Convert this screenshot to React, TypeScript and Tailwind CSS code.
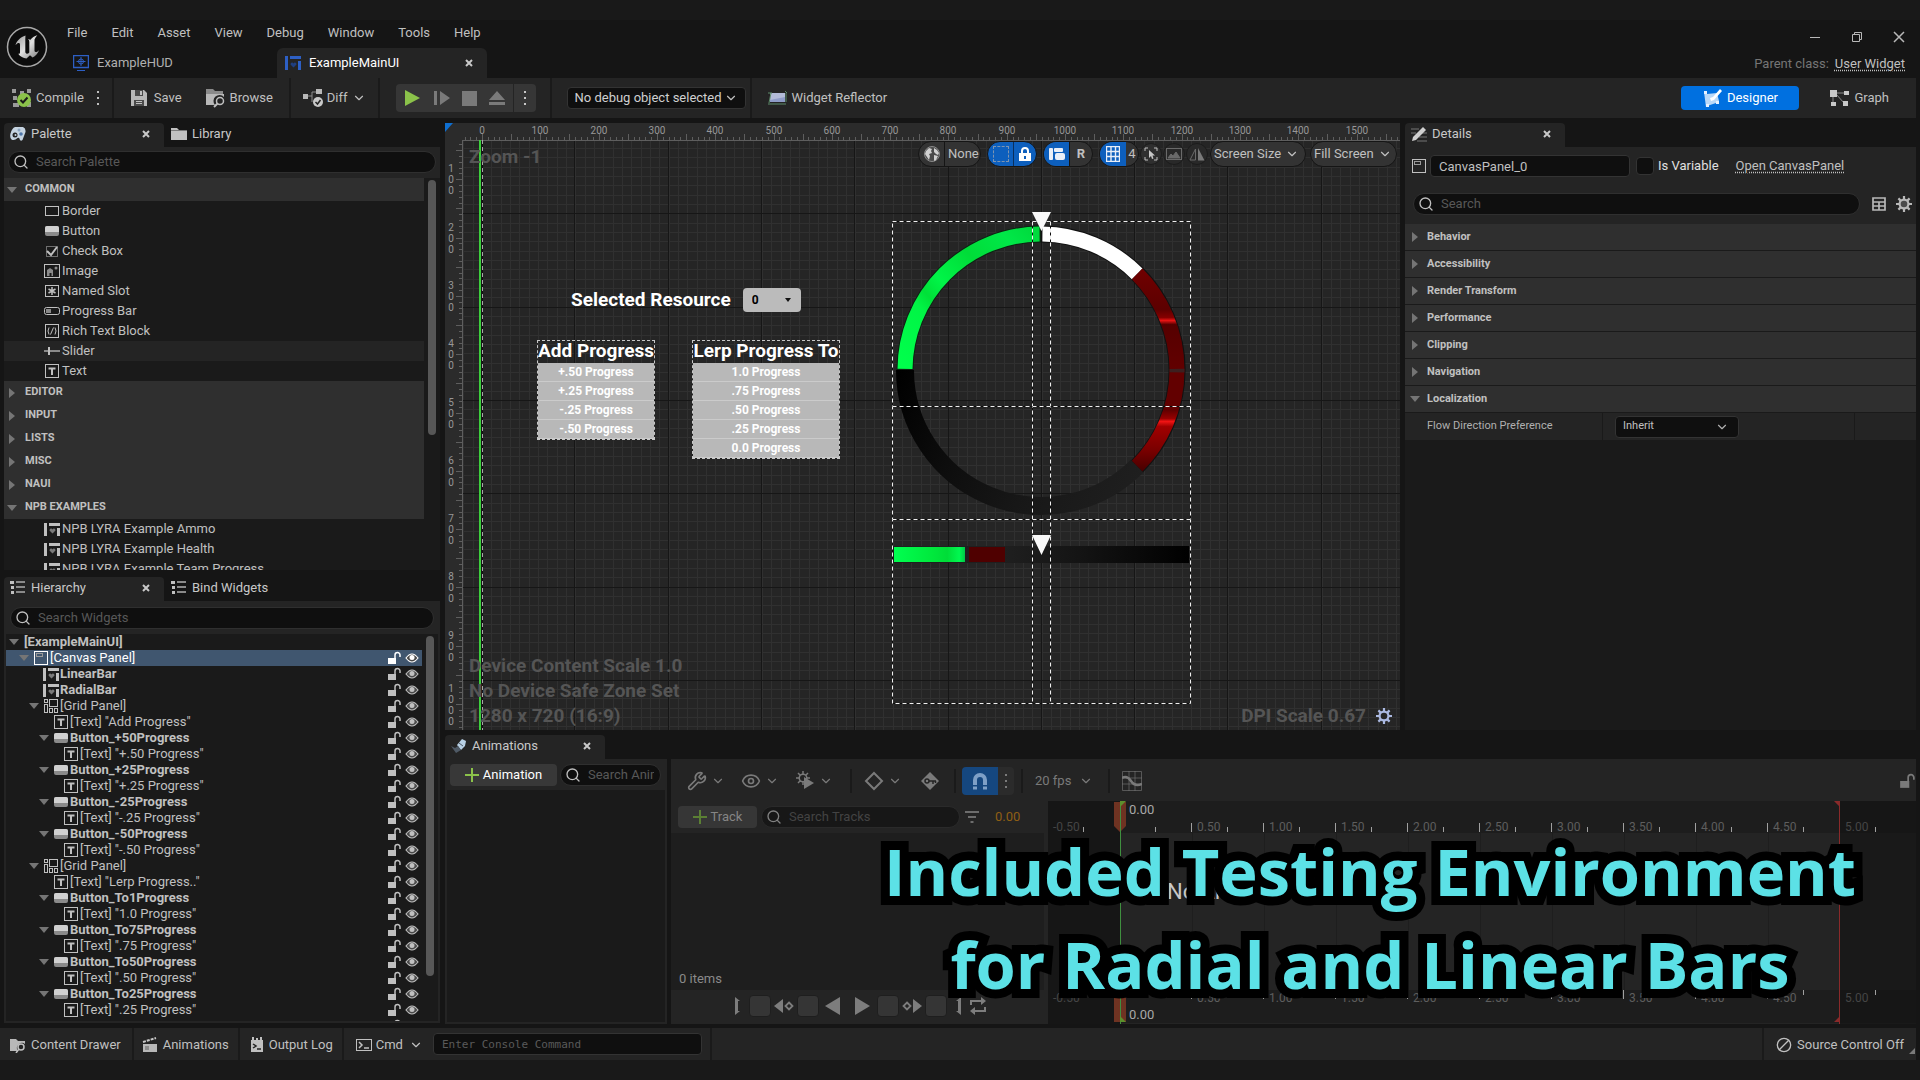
import { useState, type ReactNode } from "react";
import { ChevronDown, Search, Wrench, Eye, Ban } from "lucide-react";

/* ─────────────────────────────────────────────
   Data
───────────────────────────────────────────── */
const MENUS = ["File", "Edit", "Asset", "View", "Debug", "Window", "Tools", "Help"];

type IconName =
  | "border"
  | "button"
  | "check"
  | "image"
  | "slot"
  | "progress"
  | "rich"
  | "slider"
  | "text"
  | "widget"
  | "canvas"
  | "grid";

const COMMON: { icon: IconName; label: string }[] = [
  { icon: "border", label: "Border" },
  { icon: "button", label: "Button" },
  { icon: "check", label: "Check Box" },
  { icon: "image", label: "Image" },
  { icon: "slot", label: "Named Slot" },
  { icon: "progress", label: "Progress Bar" },
  { icon: "rich", label: "Rich Text Block" },
  { icon: "slider", label: "Slider" },
  { icon: "text", label: "Text" },
];

const EXAMPLES = [
  "NPB LYRA Example Ammo",
  "NPB LYRA Example Health",
  "NPB LYRA Example Team Progress",
];

type Node = { level: number; icon?: IconName; label: string; bold?: boolean; open?: boolean };

const TREE: Node[] = [
  { level: 0, label: "[ExampleMainUI]", bold: true, open: true },
  { level: 1, icon: "canvas", label: "[Canvas Panel]", open: true },
  { level: 2, icon: "widget", label: "LinearBar", bold: true },
  { level: 2, icon: "widget", label: "RadialBar", bold: true },
  { level: 2, icon: "grid", label: "[Grid Panel]", open: true },
  { level: 3, icon: "text", label: '[Text] "Add Progress"' },
  { level: 3, icon: "button", label: "Button_+50Progress", bold: true, open: true },
  { level: 4, icon: "text", label: '[Text] "+.50 Progress"' },
  { level: 3, icon: "button", label: "Button_+25Progress", bold: true, open: true },
  { level: 4, icon: "text", label: '[Text] "+.25 Progress"' },
  { level: 3, icon: "button", label: "Button_-25Progress", bold: true, open: true },
  { level: 4, icon: "text", label: '[Text] "-.25 Progress"' },
  { level: 3, icon: "button", label: "Button_-50Progress", bold: true, open: true },
  { level: 4, icon: "text", label: '[Text] "-.50 Progress"' },
  { level: 2, icon: "grid", label: "[Grid Panel]", open: true },
  { level: 3, icon: "text", label: '[Text] "Lerp Progress.."' },
  { level: 3, icon: "button", label: "Button_To1Progress", bold: true, open: true },
  { level: 4, icon: "text", label: '[Text] "1.0 Progress"' },
  { level: 3, icon: "button", label: "Button_To75Progress", bold: true, open: true },
  { level: 4, icon: "text", label: '[Text] ".75 Progress"' },
  { level: 3, icon: "button", label: "Button_To50Progress", bold: true, open: true },
  { level: 4, icon: "text", label: '[Text] ".50 Progress"' },
  { level: 3, icon: "button", label: "Button_To25Progress", bold: true, open: true },
  { level: 4, icon: "text", label: '[Text] ".25 Progress"' },
  { level: 3, icon: "button", label: "Button_To0Progress", bold: true, open: true },
];

const INDENT = ["pl-[3px]", "pl-[13px]", "pl-[23px]", "pl-[33px]", "pl-[43px]"];

const SECTIONS = [
  "Behavior",
  "Accessibility",
  "Render Transform",
  "Performance",
  "Clipping",
  "Navigation",
];

/* ─────────────────────────────────────────────
   Icons
───────────────────────────────────────────── */
function WidgetIcon({ name }: { name: IconName }) {
  return (
    <svg viewBox="0 0 16 16" className="size-4 shrink-0" fill="none" stroke="currentColor" aria-hidden>
      {name === "border" && <rect x="1.5" y="3.5" width="13" height="9" />}
      {name === "button" && (
        <g stroke="none">
          <rect x="1" y="3" width="14" height="10" rx="2" fill="#8a8a8a" />
          <path d="M1 9V5a2 2 0 0 1 2-2h10a2 2 0 0 1 2 2v4z" fill="#d0d0d0" />
        </g>
      )}
      {name === "check" && (
        <g>
          <rect x="2.5" y="3.5" width="11" height="10" stroke="#6f6f6f" />
          <path d="M3 8l4 4 6-8" strokeWidth="2" />
        </g>
      )}
      {name === "image" && (
        <g>
          <rect x="0.5" y="1.5" width="15" height="13" />
          <path d="M3 13V7l3-2 3 2v6H7.500v-3h-2v3z" fill="#8a8a8a" stroke="none" />
          <circle cx="12" cy="5" r="1.500" fill="#8a8a8a" stroke="none" />
        </g>
      )}
      {name === "slot" && (
        <g>
          <rect x="1.5" y="2.5" width="13" height="11" />
          <path d="M8 4v8M4.500 6l7 4M11.500 6l-7 4" strokeWidth="1.500" />
        </g>
      )}
      {name === "progress" && (
        <g>
          <rect x="0.5" y="4.5" width="15" height="7" rx="2" />
          <rect x="2" y="6" width="5" height="4" fill="#8a8a8a" stroke="none" />
        </g>
      )}
      {name === "rich" && (
        <g>
          <rect x="1.5" y="1.5" width="13" height="13" />
          <path d="M5 4.500Q3 8 5 11.500M11 4.500Q13 8 11 11.500M9.500 4.500l-3 7" />
        </g>
      )}
      {name === "slider" && (
        <g>
          <path d="M0 8h16" stroke="#8a8a8a" strokeWidth="2" />
          <path d="M5 4v8" strokeWidth="2" />
        </g>
      )}
      {name === "text" && (
        <g>
          <rect x="1.5" y="1.5" width="13" height="13" />
          <path d="M4.500 5.500h7M8 5v7" strokeWidth="2" />
        </g>
      )}
      {name === "widget" && (
        <g stroke="none" fill="currentColor">
          <rect x="0" y="2" width="3" height="13" />
          <rect x="5" y="2" width="11" height="3" />
          <rect x="13" y="7" width="3" height="8" />
          <path d="M8.500 12.500L5.500 9.500q0-2 1.500-2 1 0 1.500 1 .5-1 1.500-1 1.500 0 1.500 2z" fill="#7a7a7a" />
        </g>
      )}
      {name === "canvas" && (
        <g>
          <rect x="1.500" y="1.500" width="13" height="13" />
          <rect x="3.500" y="3.500" width="6" height="3" stroke="#9a9a9a" />
        </g>
      )}
      {name === "grid" && (
        <g>
          <rect x="1.500" y="1.500" width="3" height="3" />
          <rect x="6.500" y="1.500" width="8" height="7" />
          <rect x="1.500" y="6.500" width="3" height="8" />
          <rect x="6.500" y="10.500" width="3" height="4" />
          <rect x="11.500" y="10.500" width="3" height="4" />
        </g>
      )}
    </svg>
  );
}

function Arrow({ open }: { open?: boolean }) {
  return (
    <svg viewBox="0 0 10 10" className="size-[10px] shrink-0" fill="#757575" aria-hidden>
      {open ? <path d="M0 2h10L5 8z" /> : <path d="M2 0v10l6-5z" />}
    </svg>
  );
}

function UnrealLogo() {
  return (
    <svg viewBox="0 0 42 42" className="size-[42px]" aria-hidden>
      <defs>
        <linearGradient id="steel" x1="0" y1="0" x2="1" y2="1">
          <stop offset="0" stopColor="#9a9a9a" />
          <stop offset="0.5" stopColor="#e0e0e0" />
          <stop offset="1" stopColor="#7d7d7d" />
        </linearGradient>
      </defs>
      <circle cx="21" cy="21" r="19.500" fill="#0c0c0c" stroke="#a8a8a8" strokeWidth="1.500" />
      <path
        d="M19.500 9.500c-5 1.500-8.500 5-10 9.500 1.500-1.600 2.600-2.200 3.400-2 1 .2 1.100 1 1.100 2v7.500c0 1.200-.6 1.500-1.800 1.300 2 3 5 4.400 8.300 4.600l3.500-3.200 2.600 2.200c3-1.500 5.300-4 6.400-7.200-1.500 1.400-2.500 2-3.400 1.800-.8-.1-1.100-.6-1.100-1.500V13.500c.6-1.500 1.700-3 2.800-4.300-3 .8-5.300 2.500-7.200 4.800-.5-.6-1.100-.9-2-.9.8.8 1.200 1.700 1.200 2.900v10.500c-.8.9-1.600 1.300-2.400 1.200-1-.1-1.600-.7-1.600-1.900V14.300c0-2 .1-3.300.2-4.800z"
        fill="url(#steel)"
      />
    </svg>
  );
}

function WidgetTabIcon() {
  return (
    <svg viewBox="0 0 16 16" className="size-4" fill="#2d5fc4" aria-hidden>
      <rect x="0" y="1" width="3" height="14" />
      <rect x="5" y="1" width="11" height="3" />
      <rect x="13" y="6" width="3" height="9" />
      <path d="M8.500 12.500l-3-3q0-2 1.500-2 1 0 1.500 1 .5-1 1.500-1 1.500 0 1.500 2z" fill="#1f3f80" />
    </svg>
  );
}

function ListIcon() {
  return (
    <svg viewBox="0 0 16 16" className="size-4" fill="#c0c0c0" aria-hidden>
      <path d="M0 1h4v3H0zM1 6h3v3H1zM1 11h3v3H1z" />
      <path d="M6 1h9v2H6zM6 6h9v2H6zM6 11h9v2H6z" fill="#8a8a8a" />
    </svg>
  );
}

function OpenLock({ className }: { className: string }) {
  return (
    <svg viewBox="0 0 14 14" className={className} aria-hidden>
      <rect x="1" y="7" width="8" height="6" fill="currentColor" />
      <path d="M8 7V4a2.500 2.500 0 0 1 5 0v2" fill="none" stroke="currentColor" strokeWidth="1.500" />
    </svg>
  );
}

function EyeDot() {
  return (
    <svg viewBox="0 0 14 12" className="h-3 w-3.5" aria-hidden>
      <path d="M1 6q6-8 12 0-6 8-12 0z" fill="#4a4a4a" stroke="currentColor" strokeWidth="1.200" />
      <circle cx="7" cy="5.500" r="2.500" fill="currentColor" />
    </svg>
  );
}

function GearIcon({ className, hole }: { className: string; hole: string }) {
  return (
    <svg viewBox="0 0 16 16" className={className} aria-hidden>
      <path
        d="M8 0v16M0 8h16M2.400 2.400l11.200 11.200M13.600 2.400L2.400 13.600"
        stroke="currentColor"
        strokeWidth="2.200"
      />
      <circle cx="8" cy="8" r="5.500" fill="currentColor" />
      <circle cx="8" cy="8" r="3.300" fill={hole} />
    </svg>
  );
}

function Dots() {
  return (
    <svg viewBox="0 0 4 16" className="h-4 w-1" fill="currentColor" aria-hidden>
      <rect x="1" y="1" width="2" height="2" />
      <rect x="1" y="7" width="2" height="2" />
      <rect x="1" y="13" width="2" height="2" />
    </svg>
  );
}

/* ─────────────────────────────────────────────
   Shared pieces
───────────────────────────────────────────── */
function PanelTab({ icon, label, active }: { icon: ReactNode; label: string; active?: boolean }) {
  return (
    <div
      className={
        active
          ? "flex h-6 w-40 items-center rounded-t bg-[#242424] pb-0.5 pl-1.5"
          : "flex h-6 items-center pb-0.5 pl-[7px] text-[#c0c0c0]"
      }
    >
      <span className="flex w-4 justify-center">{icon}</span>
      <button className="ml-[5px] text-[13px] text-[#c8c8c8]">{label}</button>
      {active && (
        <button aria-label={`Close ${label}`} className="mr-[13px] ml-auto">
          <CloseX />
        </button>
      )}
    </div>
  );
}

function CloseX() {
  return (
    <svg viewBox="0 0 10 10" className="size-[10px]" stroke="#c8c8c8" strokeWidth="2" aria-hidden>
      <path d="M2 2l6 6M8 2L2 8" />
    </svg>
  );
}

function SearchBox({ label, className, dim }: { label: string; className: string; dim?: boolean }) {
  return (
    <label
      className={`flex h-[22px] min-w-0 items-center rounded-full border border-[#2f2f2f] bg-[#0f0f0f] pl-1 ${className} ${dim ? "opacity-60" : ""}`}
    >
      <Search className="size-4 shrink-0 text-[#c0c0c0]" />
      <input
        type="text"
        aria-label={label}
        placeholder={label}
        className="ml-[7px] w-full min-w-0 bg-transparent text-[13px] text-[#c0c0c0] outline-none placeholder:text-[#585858]"
      />
    </label>
  );
}

function Sep({ className }: { className: string }) {
  return <span className={`w-0.5 self-stretch bg-[#1a1a1a] ${className}`} />;
}

/* ─────────────────────────────────────────────
   Header
───────────────────────────────────────────── */
function TitleBar() {
  return (
    <header className="flex h-[58px] bg-[#151515] pl-1.5">
      <div className="pt-1.5">
        <UnrealLogo />
      </div>
      <div className="ml-[19px] flex flex-col justify-between">
        <nav className="flex h-[26px] items-center gap-6 text-[13px] text-[#c0c0c0]">
          {MENUS.map((m) => (
            <button key={m}>{m}</button>
          ))}
        </nav>
        <div className="flex h-[30px] items-center text-[13px]">
          <div className="flex w-[210px] items-center gap-2 pl-1.5 text-[#b0b0b0]">
            <svg viewBox="0 0 16 16" className="size-4" fill="none" stroke="#2d5fc4" aria-hidden>
              <rect x="0.500" y="0.500" width="15" height="12" strokeWidth="1.500" />
              <circle cx="8" cy="6.500" r="2.500" />
              <path d="M8 2v9M3.500 6.500h9M4 15.500h8" />
            </svg>
            <button>ExampleHUD</button>
          </div>
          <div className="flex h-full w-[210px] items-center gap-2 rounded-t-md bg-[#242424] pr-[13px] pl-2 text-white">
            <WidgetTabIcon />
            <button>ExampleMainUI</button>
            <button aria-label="Close ExampleMainUI" className="ml-auto">
              <CloseX />
            </button>
          </div>
        </div>
      </div>
      <div className="mr-[11px] ml-auto flex flex-col items-end text-[13px]">
        <div className="flex h-[34px] items-center gap-[30px] text-[#b8b8b8]">
          <button aria-label="Minimize">
            <svg viewBox="0 0 12 12" className="size-3" stroke="currentColor" aria-hidden>
              <path d="M1 6.500h10" />
            </svg>
          </button>
          <button aria-label="Restore">
            <svg viewBox="0 0 12 12" className="size-3" fill="none" stroke="currentColor" aria-hidden>
              <path d="M1.500 3.500h7v7h-7zM3.500 3.500v-2h7v7h-2" />
            </svg>
          </button>
          <button aria-label="Close window">
            <svg viewBox="0 0 12 12" className="size-3" stroke="currentColor" strokeWidth="1.500" aria-hidden>
              <path d="M1 1l10 10M11 1L1 11" />
            </svg>
          </button>
        </div>
        <div className="flex gap-1.5 text-[#757575]">
          Parent class:
          <a href="#" className="text-[#c0c0c0] underline decoration-dotted underline-offset-2">
            User Widget
          </a>
        </div>
      </div>
    </header>
  );
}

function Toolbar() {
  return (
    <div className="flex h-10 items-center bg-[#242424] text-[13px] text-[#c0c0c0]">
      <button className="ml-3 flex items-center gap-1">
        <svg viewBox="0 0 20 20" className="size-5" aria-hidden>
          <path d="M0 1h4v4H0zM8 3h4v4H8zM15 1h4v4h-4zM1 8h4v4H1zM1 15h6v4H1zM15 14h4v5h-4z" fill="#9a9a9a" />
          <circle cx="12" cy="12" r="7" fill="#8bc24a" />
          <path d="M8.500 12l2.500 2.500 4.500-5" fill="none" stroke="#1a1a1a" strokeWidth="2" />
        </svg>
        Compile
      </button>
      <button aria-label="Compile options" className="ml-3">
        <Dots />
      </button>
      <Sep className="ml-3" />
      <button className="ml-4 flex items-center gap-1.5">
        <svg viewBox="0 0 18 18" className="size-[18px]" fill="#b8b8b8" aria-hidden>
          <path d="M1 1h13l3 3v13H1z" />
          <path d="M5 1h8v6H5zM4 11h10v6H4z" fill="#4a4a4a" />
          <path d="M10 2h2v4h-2zM6 12h6v1H6zM6 14h6v1H6z" fill="#c0c0c0" />
        </svg>
        Save
      </button>
      <button className="ml-6 flex items-center gap-1">
        <svg viewBox="0 0 20 20" className="size-5" aria-hidden>
          <path d="M0 1h7l2 2h8v3H0z" fill="#8a8a8a" />
          <path d="M0 6h18v3a6 6 0 0 0-9 8H0z" fill="#b8b8b8" />
          <circle cx="14" cy="13" r="3.500" fill="none" stroke="#c0c0c0" strokeWidth="1.500" />
          <path d="M11.500 15.500L8 19" stroke="#c0c0c0" strokeWidth="2" />
        </svg>
        Browse
      </button>
      <Sep className="ml-4" />
      <button className="ml-3 flex items-center gap-1">
        <svg viewBox="0 0 20 20" className="size-5" aria-hidden>
          <path d="M5 8h4V4h5M9 8v6" fill="none" stroke="#8a8a8a" />
          <path d="M0 6h5v5H0zM13 1h6v5h-6z" fill="#b8b8b8" />
          <circle cx="15" cy="14" r="5" fill="#c8c8c8" />
          <path d="M12.500 14l2 2 3-4" fill="none" stroke="#242424" strokeWidth="1.500" />
        </svg>
        Diff
        <ChevronDown className="size-3.5" />
      </button>
      <Sep className="ml-3" />

      <div className="ml-4 flex h-7 w-[140px] items-center rounded bg-[#363636] text-[#7a7a7a]">
        <button aria-label="Play" className="ml-2">
          <svg viewBox="0 0 18 18" className="size-[18px]" fill="#8bc24a" aria-hidden>
            <path d="M1 1v16l15-8z" />
          </svg>
        </button>
        <button aria-label="Step" className="ml-3">
          <svg viewBox="0 0 16 16" className="size-4" fill="currentColor" aria-hidden>
            <path d="M0 1h3v14H0zM6 1v14l10-7z" />
          </svg>
        </button>
        <button aria-label="Stop" className="ml-3">
          <span className="block size-[15px] bg-[#7a7a7a]" />
        </button>
        <button aria-label="Eject" className="ml-3">
          <svg viewBox="0 0 16 16" className="size-4" fill="currentColor" aria-hidden>
            <path d="M0 10L8 1l8 9zM0 12h16v3H0z" />
          </svg>
        </button>
        <span className="ml-2 h-full w-px bg-[#242424]" />
        <button aria-label="Play options" className="ml-[9px] text-[#c8c8c8]">
          <Dots />
        </button>
      </div>
      <Sep className="ml-3.5" />

      <span className="relative ml-[15px] flex items-center">
        <select
          aria-label="Debug object"
          className="h-[22px] w-[179px] appearance-none rounded border border-[#333] bg-[#0f0f0f] pl-[7px] text-[13px] text-[#d0d0d0] outline-none"
        >
          <option>No debug object selected</option>
        </select>
        <ChevronDown className="pointer-events-none absolute right-2 size-3.5" />
      </span>
      <Sep className="ml-1" />
      <button className="ml-4 flex items-center gap-1">
        <svg viewBox="0 0 20 18" className="h-[18px] w-5" aria-hidden>
          <path d="M2 4h15v9H2z" fill="#8f9cc8" />
          <path d="M2 4h15v4L2 11z" fill="#b3bbd8" />
          <path d="M0 4h4M1 14l2-10M17 2l2 2M0 15h18M18 4v9" fill="none" stroke="#5d8a6a" />
        </svg>
        Widget Reflector
      </button>

      <button className="mr-[31px] ml-auto flex h-6 w-[118px] items-center justify-center gap-1 rounded bg-[#0070e0] text-white">
        <svg viewBox="0 0 20 20" className="size-5" aria-hidden>
          <path d="M1 4l3 2 10-1 2 8-3 2-9 3-1 1z" fill="#b9d8f8" />
          <path d="M8 13l-1-3 3-1 7-8 2 2-8 9z" fill="#fff" />
          <path d="M1 3h3v3H1zM3 16h3v3H3zM13 13h3v3h-3z" fill="#e8f2ff" />
        </svg>
        Designer
      </button>
      <button className="mr-[27px] flex items-center gap-1">
        <svg viewBox="0 0 20 18" className="h-[18px] w-5" fill="#c8c8c8" aria-hidden>
          <path d="M6 4h9M6 5l8 9M3 7v8" fill="none" stroke="#8a8a8a" />
          <path d="M0 1h7v7H0zM14 2h5v4h-5zM1 13h5v4H1zM13 12h5v5h-5z" />
        </svg>
        Graph
      </button>
    </div>
  );
}

/* ─────────────────────────────────────────────
   Left column
───────────────────────────────────────────── */
function CategoryRow({ label, open }: { label: string; open?: boolean }) {
  return (
    <button className="flex h-[23px] w-full items-center gap-2 bg-[#2f2f2f] pl-[3px] text-[11px] font-bold text-[#c0c0c0]">
      <Arrow open={open} />
      {label}
    </button>
  );
}

function PaletteItem({ icon, label, hover }: { icon: IconName; label: string; hover?: boolean }) {
  return (
    <li className={`flex h-5 items-center gap-0.5 pl-10 text-[#c0c0c0] ${hover ? "bg-[#242424]" : ""}`}>
      <WidgetIcon name={icon} />
      <span className="text-[13px] whitespace-nowrap">{label}</span>
    </li>
  );
}

function Palette() {
  return (
    <section className="flex min-h-0 flex-1 flex-col">
      <div className="flex">
        <PanelTab
          active
          label="Palette"
          icon={
            <svg viewBox="0 0 16 16" className="size-4" aria-hidden>
              <path d="M5 1h8q3 1 2.500 5l-3 8q-2 2-3-1 0-2-2-1-3 3-6 1.500-2-2-1-6Q2 2 5 1z" fill="#c5d3e0" />
              <circle cx="5" cy="9" r="2.500" fill="#242424" />
              <circle cx="5.500" cy="9" r="1" fill="#c5d3e0" />
              <circle cx="9" cy="4" r="1.500" fill="#8ba5c0" />
              <circle cx="11" cy="8" r="1.800" fill="#4f76a8" />
            </svg>
          }
        />
        <PanelTab
          label="Library"
          icon={
            <svg viewBox="0 0 16 16" className="size-4" fill="#c0c0c0" aria-hidden>
              <path d="M0 2h6l2 2h8v10H0z" />
              <path d="M0 4h16v1H0z" fill="#7a7a7a" />
            </svg>
          }
        />
      </div>
      <div className="flex min-h-0 flex-1 flex-col bg-[#242424]">
        <SearchBox label="Search Palette" className="mx-1 mt-1 mb-[5px]" />
        <div className="flex min-h-0 flex-1 bg-[#1a1a1a]">
          <div className="min-w-0 flex-1 overflow-hidden">
            <CategoryRow label="COMMON" open />
            <ul>
              {COMMON.map((c) => (
                <PaletteItem key={c.label} icon={c.icon} label={c.label} hover={c.label === "Slider"} />
              ))}
            </ul>
            {["EDITOR", "INPUT", "LISTS", "MISC", "NAUI"].map((c) => (
              <CategoryRow key={c} label={c} />
            ))}
            <CategoryRow label="NPB EXAMPLES" open />
            <ul>
              {EXAMPLES.map((e) => (
                <PaletteItem key={e} icon="widget" label={e} />
              ))}
            </ul>
          </div>
          <div className="w-4 pt-0.5 pl-1">
            <div className="h-[255px] w-2 rounded-full bg-[#575757]" />
          </div>
        </div>
      </div>
    </section>
  );
}

function Hierarchy() {
  return (
    <section className="flex min-h-0 flex-1 flex-col">
      <div className="flex">
        <PanelTab active label="Hierarchy" icon={<ListIcon />} />
        <PanelTab label="Bind Widgets" icon={<ListIcon />} />
      </div>
      <div className="flex min-h-0 flex-1 flex-col bg-[#242424] px-0.5 pb-0.5">
        <SearchBox label="Search Widgets" className="mx-1 mt-1.5 mb-[5px]" />
        <div className="flex min-h-0 flex-1 bg-[#1a1a1a]">
          <ul className="min-w-0 flex-1 overflow-hidden">
            {TREE.map((n, i) => (
              <li
                key={i}
                className={`flex h-4 items-center ${INDENT[n.level]} ${i === 1 ? "bg-[#40566f] text-white" : "text-[#c0c0c0]"}`}
              >
                <span className="mr-1 w-[10px] shrink-0">{n.open && <Arrow open />}</span>
                {n.icon && <WidgetIcon name={n.icon} />}
                <span className={`ml-px text-[13px] leading-4 whitespace-nowrap ${n.bold ? "font-bold" : ""}`}>
                  {n.label}
                </span>
                {i > 0 && (
                  <span className="mr-[3px] ml-auto flex items-center gap-1">
                    <button aria-label={`Lock ${n.label}`}>
                      <OpenLock className="size-3.5" />
                    </button>
                    <button aria-label={`Visibility of ${n.label}`}>
                      <EyeDot />
                    </button>
                  </span>
                )}
              </li>
            ))}
          </ul>
          <div className="w-4 pt-0.5 pl-1">
            <div className="h-[340px] w-2 rounded-full bg-[#575757]" />
          </div>
        </div>
      </div>
    </section>
  );
}

/* ─────────────────────────────────────────────
   Designer canvas
───────────────────────────────────────────── */
const UNIT = 0.583; // screen px per slate unit at zoom -1
const OX = 37;
const OY = -2;

// stroke along the ring, degrees clockwise from 12 o'clock
function arc(from: number, to: number, cx = 596, cy = 247, r = 136) {
  const p = (deg: number) => {
    const a = ((deg - 90) * Math.PI) / 180;
    return `${(cx + r * Math.cos(a)).toFixed(2)} ${(cy + r * Math.sin(a)).toFixed(2)}`;
  };
  return `M${p(from)}A${r} ${r} 0 ${to - from > 180 ? 1 : 0} 1 ${p(to)}`;
}

function Dashed({ d }: { d: string }) {
  return (
    <g fill="none">
      <path d={d} stroke="#0c0c0c" />
      <path d={d} stroke="#f0f0f0" strokeDasharray="4 3" />
    </g>
  );
}

function CanvasDrawing() {
  const minor = Array.from({ length: 420 }, (_, i) => i);
  const ticks = Array.from({ length: 420 }, (_, i) => i - 3);
  const columns = Array.from({ length: 16 }, (_, i) => i * 100);
  const rows = Array.from({ length: 10 }, (_, i) => (i + 1) * 100);

  return (
    <svg className="absolute inset-0 size-full" aria-hidden>
      <defs>
        <linearGradient id="red" gradientUnits="userSpaceOnUse" x1="0" y1="146" x2="0" y2="348">
          <stop offset="0" stopColor="#700000" />
          <stop offset="0.200" stopColor="#5c0000" />
          <stop offset="0.240" stopColor="#850000" />
          <stop offset="0.255" stopColor="#e81414" />
          <stop offset="0.275" stopColor="#560000" />
          <stop offset="0.500" stopColor="#620000" />
          <stop offset="0.700" stopColor="#620000" />
          <stop offset="0.740" stopColor="#980000" />
          <stop offset="0.755" stopColor="#f01414" />
          <stop offset="0.780" stopColor="#a00000" />
          <stop offset="0.900" stopColor="#780000" />
          <stop offset="1" stopColor="#480000" />
        </linearGradient>
        <linearGradient id="green" gradientUnits="userSpaceOnUse" x1="453" y1="240" x2="596" y2="110">
          <stop offset="0" stopColor="#00ff4c" />
          <stop offset="0.280" stopColor="#00f545" />
          <stop offset="0.350" stopColor="#00e038" />
          <stop offset="0.450" stopColor="#00f548" />
          <stop offset="0.650" stopColor="#00dc38" />
          <stop offset="0.850" stopColor="#00e848" />
          <stop offset="1" stopColor="#00d83c" />
        </linearGradient>
        <linearGradient id="dark" gradientUnits="userSpaceOnUse" x1="453" y1="247" x2="700" y2="350">
          <stop offset="0" stopColor="#000" />
          <stop offset="0.300" stopColor="#0d0d0d" />
          <stop offset="0.600" stopColor="#171717" />
          <stop offset="1" stopColor="#1f1f1f" />
        </linearGradient>
        <linearGradient id="barDark">
          <stop offset="0" stopColor="#1f1f1f" />
          <stop offset="0.400" stopColor="#141414" />
          <stop offset="1" stopColor="#000" />
        </linearGradient>
        <linearGradient id="barGreen">
          <stop offset="0" stopColor="#00ff50" />
          <stop offset="0.550" stopColor="#00e83c" />
          <stop offset="0.750" stopColor="#00dc38" />
          <stop offset="0.920" stopColor="#00f850" />
          <stop offset="1" stopColor="#00c848" />
        </linearGradient>
      </defs>

      {/* grid */}
      <g shapeRendering="crispEdges" fill="#303030">
        {minor.map((i) => (
          <rect key={`v${i}`} x={Math.round(OX - 28 + i * 9.33)} y="0" width="1" height="100%" />
        ))}
        {minor.map((i) => (
          <rect key={`h${i}`} x="0" y={Math.round(-3 + i * 9.33)} width="100%" height="1" />
        ))}
      </g>
      <g shapeRendering="crispEdges" fill="#161616">
        {minor.slice(0, 42).map((i) => (
          <rect key={`v${i}`} x={Math.round(OX - 1 + i * 93.3)} y="0" width="1" height="100%" />
        ))}
        {minor.slice(0, 42).map((i) => (
          <rect key={`h${i}`} x="0" y={Math.round(-3 + i * 93.3)} width="100%" height="1" />
        ))}
      </g>

      {/* rulers */}
      <rect width="100%" height="17" fill="#2b2b2b" />
      <rect width="18" height="100%" fill="#2b2b2b" />
      <g shapeRendering="crispEdges" fill="#5e5e5e">
        <rect x="17" y="17" width="100%" height="1" />
        <rect x="17" y="17" width="1" height="100%" />
        {ticks.map((i) => {
          const h = i % 5 === 0 ? 6 : 3;
          return <rect key={i} x={Math.round(OX + i * 10 * UNIT)} y={17 - h} width="1" height={h} />;
        })}
        {ticks.slice(7).map((i) => {
          const w = i % 5 === 0 ? 6 : 3;
          return <rect key={i} x={17 - w} y={Math.round(OY + i * 10 * UNIT)} width={w} height="1" />;
        })}
      </g>
      <g fill="#979797" fontSize="10" textAnchor="middle">
        {columns.map((v) => (
          <text key={v} x={Math.round(OX + v * UNIT)} y="11">
            {v}
          </text>
        ))}
        {rows.map((v) => {
          const chars = String(v).split("");
          const mid = OY + v * UNIT;
          return chars.map((c, k) => (
            <text key={`${v}-${k}`} x="6" y={Math.round(mid + 4 + (k - (chars.length - 1) / 2) * 11)}>
              {c}
            </text>
          ));
        })}
      </g>
      <path d="M0 0h8L0 9z" fill="#0f6fd0" />

      {/* screen edge */}
      <rect x="34" y="17" width="2" height="100%" fill="#3ccf3c" />
      <path d="M37.500 17V2000" stroke="#111" />
      <path d="M37.500 17V2000" stroke="#a8a8a8" strokeDasharray="4 3" />

      {/* radial bar */}
      <g fill="none">
        <path d={arc(135, 270)} stroke="url(#dark)" strokeWidth="18" />
        <path d={arc(0, 135)} stroke="#111" strokeWidth="17" />
        <path d={arc(270, 360)} stroke="#0c2412" strokeWidth="17" />
        <path d={arc(270.500, 359.400)} stroke="url(#green)" strokeWidth="15" />
        <path d={arc(0.600, 45)} stroke="#fff" strokeWidth="15" />
        <path d={arc(45, 135)} stroke="url(#red)" strokeWidth="15" />
        <path d={arc(89.500, 91)} stroke="#3c2020" strokeWidth="15" />
      </g>

      {/* linear bar */}
      <rect x="448" y="423" width="296" height="17" fill="#1f1f1f" />
      <rect x="560" y="423" width="184" height="17" fill="url(#barDark)" />
      <rect x="449" y="424" width="71" height="15" fill="url(#barGreen)" />
      <rect x="524" y="424" width="36" height="15" fill="#4f0000" />

      <Dashed d="M447.500 98.500H745.500V580.500H447.500z" />
      <Dashed d="M587.500 98.500V580.500M605.500 98.500V580.500" />
      <Dashed d="M447.500 283.500H745.500M447.500 396.500H745.500" />
      <path d="M587 89h19l-9.500 19zM587 412h19l-9.500 20z" fill="#f8f8f8" />
    </svg>
  );
}

const PILL = "flex h-[26px] items-center overflow-hidden rounded-full border border-[#151515]";

function CanvasTools() {
  return (
    <div className="absolute top-[18px] right-[3px] flex items-center text-[13px] text-[#c0c0c0]">
      <button className={`${PILL} w-[63px] bg-[#333]`}>
        <span className="flex h-full w-[26px] items-center justify-center border-r border-[#151515]">
          <svg viewBox="0 0 16 16" className="size-4" aria-hidden>
            <circle cx="8" cy="8" r="7.500" fill="#4a4a4a" stroke="#8a8a8a" />
            <path d="M2 5l3-3 3 1-1 2 1 2-3 1 1 2-1 4-2-3-2-3zM10 2l3 2 2 3-1 2-2-1-2-2zM10 9l4 1-2 4-2 1z" fill="#d0d0d0" />
          </svg>
        </span>
        <span className="pl-[3px]">None</span>
      </button>
      <div className={`${PILL} ml-1.5 w-[50px] bg-[#0d5fbd] text-white`}>
        <button aria-label="Outlines" className="flex h-full w-[26px] items-center justify-center border-r border-[#0a2f5c]">
          <span className="size-4 border border-dashed border-[#7d94b0]" />
        </button>
        <button aria-label="Respect locks" className="flex flex-1 justify-center">
          <svg viewBox="0 0 12 14" className="h-3.5 w-3" fill="#fff" aria-hidden>
            <path d="M0 6h12v8H0z" />
            <path d="M3 6V4a3 3 0 0 1 6 0v2" fill="none" stroke="#fff" strokeWidth="2" />
            <path d="M5 9h2v3H5z" fill="#0d5fbd" />
          </svg>
        </button>
      </div>
      <div className={`${PILL} ml-1.5 w-[50px] bg-[#333]`}>
        <button aria-label="Flow direction" className="flex h-full w-[26px] items-center justify-center border-r border-[#151515] bg-[#0d5fbd]">
          <svg viewBox="0 0 16 14" className="h-3.5 w-4" fill="#e8eef8" aria-hidden>
            <rect x="0" y="1" width="4" height="12" rx="1" />
            <rect x="5" y="1" width="9" height="4" rx="1" />
            <rect x="6" y="6" width="10" height="7" rx="2" />
          </svg>
        </button>
        <button className="flex-1 font-bold">R</button>
      </div>
      <div className={`${PILL} ml-1.5 w-10 bg-[#333]`}>
        <button aria-label="Grid snapping" className="flex h-full w-[26px] items-center justify-center bg-[#0d5fbd]">
          <svg viewBox="0 0 14 16" className="h-4 w-3.5" fill="none" stroke="#e8eef8" aria-hidden>
            <path d="M0.500 0.500h13v15h-13zM5 0v16M9.500 0v16M0 5.500h14M0 10.500h14" strokeWidth="1.400" />
          </svg>
        </button>
        <button className="flex-1">4</button>
      </div>
      <button aria-label="Zoom to fit" className="ml-px flex size-[22px] items-center justify-center rounded-full border border-[#1c1c1c] bg-[#2f2f2f]">
        <svg viewBox="0 0 14 14" className="size-3.5" fill="none" stroke="currentColor" aria-hidden>
          <path d="M1 4V1h3M10 1h3v3M13 10v3h-3M4 13H1v-3" />
          <path d="M5 3v8l2-2 1 3 1.500-.5-1-3H11z" fill="#c8c8c8" stroke="none" />
        </svg>
      </button>
      <button aria-label="Background" className="ml-px flex size-[22px] items-center justify-center rounded-full border border-[#1c1c1c] bg-[#292929]">
        <svg viewBox="0 0 16 14" className="h-3.5 w-4" fill="none" stroke="#6a6a6a" aria-hidden>
          <rect x="0.500" y="1.500" width="15" height="11" />
          <path d="M2 11l3-4 2 2 3-4 4 6z" fill="#6a6a6a" />
        </svg>
      </button>
      <button aria-label="Mirror" className="ml-px flex size-[22px] items-center justify-center rounded-full border border-[#1c1c1c] bg-[#292929]">
        <svg viewBox="0 0 16 14" className="h-3.5 w-4" aria-hidden>
          <path d="M6.500 2v11H1z" fill="none" stroke="#6a6a6a" />
          <path d="M9 1v12.500h6.500z" fill="#7a7a7a" />
        </svg>
      </button>
      <button className={`${PILL} ml-0.5 w-24 justify-between bg-[#333] pr-1.5 pl-[3px] whitespace-nowrap`}>
        Screen Size
        <ChevronDown className="size-3.5 shrink-0" />
      </button>
      <button className={`${PILL} ml-1 w-[87px] justify-between bg-[#333] pr-1 pl-[3px] whitespace-nowrap`}>
        Fill Screen
        <ChevronDown className="size-3.5 shrink-0" />
      </button>
    </div>
  );
}

function ProgressGrid({ title, rows, className }: { title: string; rows: string[]; className: string }) {
  return (
    <div className={`absolute top-[217px] border border-dashed border-[#c8c8c8] ${className}`}>
      <div className="flex h-[22px] items-center justify-center text-[19px] leading-5 font-bold whitespace-nowrap text-white">
        <span className="pb-[3px]">{title}</span>
      </div>
      {rows.map((r) => (
        <button
          key={r}
          className="block h-[19px] w-full border-b border-[#cbcbcb] bg-[#b8b8b8] text-xs leading-[18px] font-bold text-white"
        >
          {r}
        </button>
      ))}
    </div>
  );
}

function DesignerCanvas() {
  return (
    <section className="relative min-w-0 flex-1 overflow-hidden bg-[#252525]">
      <CanvasDrawing />
      <p className="absolute top-[20px] left-[24px] text-[19px] font-bold text-[#555]">Zoom -1</p>
      <CanvasTools />

      <label className="absolute top-[165px] left-[126px] flex items-center gap-3">
        <span className="text-[19px] leading-6 font-bold text-white">Selected Resource</span>
        <span className="relative flex items-center">
          <select className="h-6 w-[58px] appearance-none rounded-sm bg-[#bbb] pl-[9px] text-xs font-bold text-black outline-none">
            <option>0</option>
          </select>
          <svg viewBox="0 0 6 4" className="pointer-events-none absolute right-2.5 h-1 w-1.5" aria-hidden>
            <path d="M0 0h6L3 4z" fill="#111" />
          </svg>
        </span>
      </label>

      <ProgressGrid
        title="Add Progress"
        className="left-[92px] w-[118px]"
        rows={["+.50 Progress", "+.25 Progress", "-.25 Progress", "-.50 Progress"]}
      />
      <ProgressGrid
        title="Lerp Progress To"
        className="left-[247px] w-[148px]"
        rows={["1.0 Progress", ".75 Progress", ".50 Progress", ".25 Progress", "0.0 Progress"]}
      />

      <div className="absolute bottom-0.5 left-[24px] text-[19px] leading-[25px] font-bold text-[#555]">
        <p>Device Content Scale 1.0</p>
        <p>No Device Safe Zone Set</p>
        <p>1280 x 720 (16:9)</p>
      </div>
      <div className="absolute right-2 bottom-0.5 flex items-center gap-2.5 text-[19px] leading-[25px] font-bold text-[#555]">
        DPI Scale 0.67
        <button aria-label="DPI settings" className="text-[#aab8e0]">
          <GearIcon className="size-4" hole="#252525" />
        </button>
      </div>
    </section>
  );
}

/* ─────────────────────────────────────────────
   Details
───────────────────────────────────────────── */
function Details() {
  const [isVariable, setIsVariable] = useState(false);

  return (
    <section className="flex w-[511px] shrink-0 flex-col bg-[#1a1a1a]">
      <div className="flex bg-[#151515]">
        <PanelTab
          active
          label="Details"
          icon={
            <svg viewBox="0 0 16 16" className="size-4" aria-hidden>
              <path d="M0 3h8M0 7h5M8 11h8M6 15h10M11 7h5" stroke="#5a5a5a" strokeWidth="1.500" />
              <path d="M1 15l1-4 10-10 3 3L5 14z" fill="#d0d0d0" />
            </svg>
          }
        />
      </div>
      <div className="bg-[#242424] pb-[9px]">
        <div className="flex h-[38px] items-center pl-1.5 text-[13px] text-[#c0c0c0]">
          <WidgetIcon name="canvas" />
          <input
            aria-label="Widget name"
            defaultValue="CanvasPanel_0"
            className="ml-[3px] h-[22px] w-[200px] rounded border border-[#333] bg-[#0f0f0f] pl-2 text-[13px] outline-none"
          />
          <label className="ml-1.5 flex items-center gap-1 text-[#e0e0e0]">
            <input
              type="checkbox"
              checked={isVariable}
              onChange={(e) => setIsVariable(e.target.checked)}
              className="size-[18px] appearance-none rounded-sm border border-[#333] bg-[#0f0f0f] checked:bg-[#0070e0]"
            />
            Is Variable
          </label>
          <a href="#" className="ml-[17px] underline decoration-dotted underline-offset-2">
            Open CanvasPanel
          </a>
        </div>
        <div className="mt-2 flex items-center pr-1 pl-2 text-[#b8b8b8]">
          <SearchBox label="Search" className="flex-1" />
          <button aria-label="Property matrix" className="ml-3">
            <svg viewBox="0 0 14 14" className="size-3.5" fill="none" stroke="currentColor" aria-hidden>
              <path d="M1 1h12v12H1zM1 5h12M1 9h12M7 5v8" strokeWidth="1.700" />
            </svg>
          </button>
          <button aria-label="Details settings" className="ml-2.5">
            <GearIcon className="size-4" hole="#4a4a4a" />
          </button>
        </div>
      </div>
      {SECTIONS.map((s) => (
        <button
          key={s}
          className="flex h-[27px] items-center gap-[7px] border-b border-[#1a1a1a] bg-[#2f2f2f] pl-[5px] text-[11px] font-bold text-[#c0c0c0]"
        >
          <Arrow />
          {s}
        </button>
      ))}
      <button className="flex h-[27px] items-center gap-[7px] border-b border-[#1a1a1a] bg-[#2f2f2f] pl-[5px] text-[11px] font-bold text-[#c0c0c0]">
        <Arrow open />
        Localization
      </button>
      <div className="flex h-[27px] bg-[#242424] text-[11px] text-[#b0b0b0]">
        <label htmlFor="flow" className="flex w-[197px] items-center pl-[22px]">
          Flow Direction Preference
        </label>
        <div className="relative flex flex-1 items-center border-x border-[#1a1a1a] pl-3">
          <select
            id="flow"
            className="h-[22px] w-[124px] appearance-none rounded border border-[#333] bg-[#0f0f0f] pl-[7px] text-[11px] text-[#c0c0c0] outline-none"
          >
            <option>Inherit</option>
          </select>
          <ChevronDown className="pointer-events-none relative -left-6 size-3.5" />
        </div>
        <div className="w-[61px]" />
      </div>
    </section>
  );
}

/* ─────────────────────────────────────────────
   Animations + sequencer
───────────────────────────────────────────── */
function Plus({ color }: { color: string }) {
  return (
    <svg viewBox="0 0 14 14" className="size-3.5" stroke={color} strokeWidth="2" aria-hidden>
      <path d="M7 0v14M0 7h14" />
    </svg>
  );
}

function AnimationList() {
  return (
    <div className="flex w-[222px] flex-col px-0.5 pb-0.5">
      <div className="flex h-[31px] items-center gap-[3px] pr-1 pl-[3px]">
        <button className="flex h-[22px] w-[107px] items-center justify-center gap-1 rounded-sm bg-[#383838] text-[13px] text-white">
          <Plus color="#8bc24a" />
          Animation
        </button>
        <SearchBox label="Search Animations" className="flex-1 pr-1.5" />
      </div>
      <div className="flex-1 bg-[#1a1a1a]" />
    </div>
  );
}

function SequencerBar() {
  return (
    <div className="flex h-[42px] items-center pt-0.5 text-[13px] text-[#7a7a7a]">
      <button aria-label="Actions" className="ml-4 flex items-center gap-1">
        <Wrench className="size-5" />
        <ChevronDown className="size-3.5" />
      </button>
      <button aria-label="View options" className="ml-4 flex items-center gap-1">
        <Eye className="size-5" />
        <ChevronDown className="size-3.5" />
      </button>
      <button aria-label="Playback options" className="ml-4 flex items-center gap-1">
        <svg viewBox="0 0 20 20" className="size-5" aria-hidden>
          <path d="M8 0v14M1 7h14M3 2l10 10M13 2L3 12" stroke="currentColor" strokeWidth="1.500" />
          <circle cx="8" cy="7" r="4.500" fill="currentColor" />
          <circle cx="8" cy="7" r="3" fill="#242424" />
          <path d="M9 6v12l10-6z" fill="currentColor" />
        </svg>
        <ChevronDown className="size-3.5" />
      </button>
      <Sep className="my-2 ml-[17px]" />
      <button aria-label="Key options" className="ml-3 flex items-center gap-1">
        <svg viewBox="0 0 20 20" className="size-5" fill="none" stroke="currentColor" strokeWidth="2" aria-hidden>
          <path d="M10 2l8 8-8 8-8-8z" />
        </svg>
        <ChevronDown className="size-3.5" />
      </button>
      <button aria-label="Auto key" className="ml-[18px]">
        <svg viewBox="0 0 20 20" className="size-5" aria-hidden>
          <path d="M10 1l9 9-9 9-9-9z" fill="currentColor" />
          <circle cx="7" cy="10" r="2" fill="none" stroke="#242424" strokeWidth="1.500" />
          <path d="M9 10h7M13 10v3M15.500 10v2" stroke="#242424" strokeWidth="1.500" />
        </svg>
      </button>
      <Sep className="my-2 ml-3.5" />
      <button aria-label="Snapping" className="ml-1.5 flex h-7 w-9 items-center justify-center rounded-l bg-[#15477f]">
        <svg viewBox="0 0 16 18" className="h-[18px] w-4" fill="none" stroke="#7d9fc6" strokeWidth="4" aria-hidden>
          <path d="M3 13V8a5 5 0 0 1 10 0v5" />
          <path d="M3 14.500v3M13 14.500v3" />
        </svg>
      </button>
      <button aria-label="Snap options" className="flex h-7 w-4 items-center justify-center rounded-r bg-[#2b2b2b]">
        <Dots />
      </button>
      <Sep className="my-2 ml-[7px]" />
      <button className="ml-3 flex items-center gap-2">
        20 fps
        <ChevronDown className="size-3.5" />
      </button>
      <Sep className="my-2 ml-[15px]" />
      <button aria-label="Curve editor" className="ml-3">
        <svg viewBox="0 0 20 20" className="size-5" fill="none" stroke="currentColor" aria-hidden>
          <path d="M0.500 0.500h19v19H0.500zM7 0v20M13 0v20M0 7h20M0 13h20" strokeOpacity="0.600" />
          <path d="M0 7q5-3 9 3t11 3" strokeWidth="2.500" />
        </svg>
      </button>
      <button aria-label="Lock sequence" className="mr-px ml-auto">
        <OpenLock className="size-4" />
      </button>
    </div>
  );
}

function Square() {
  return <span className="size-[22px] rounded-sm border border-[#1e1e1e] bg-[#353535]" />;
}

function Transport() {
  return (
    <div className="flex h-[34px] items-center pb-0.5 pl-16 text-[#7d7d7d]">
      <svg viewBox="0 0 6 18" className="h-[18px] w-1.5" fill="currentColor" aria-hidden>
        <path d="M0 0l5 4H3v10h2l-5 4z" />
      </svg>
      <span className="ml-2 flex items-center gap-[3px]">
        <Square />
        <svg viewBox="0 0 20 18" className="h-[18px] w-5" fill="currentColor" aria-hidden>
          <path d="M9 2v14L0 9z" />
          <path d="M15 5.500L18.500 9 15 12.500 11.500 9z" fill="none" stroke="currentColor" strokeWidth="1.800" />
        </svg>
        <Square />
      </span>
      <button aria-label="Play reverse" className="ml-1.5">
        <svg viewBox="0 0 16 18" className="h-[18px] w-4" fill="currentColor" aria-hidden>
          <path d="M15 0v18L0 9z" />
        </svg>
      </button>
      <button aria-label="Play forward" className="ml-[13px]">
        <svg viewBox="0 0 16 18" className="h-[18px] w-4" fill="currentColor" aria-hidden>
          <path d="M1 0v18l15-9z" />
        </svg>
      </button>
      <span className="ml-[7px] flex items-center gap-[3px]">
        <Square />
        <svg viewBox="0 0 20 18" className="h-[18px] w-5" fill="currentColor" aria-hidden>
          <path d="M11 2v14l9-7z" />
          <path d="M5 5.500L8.500 9 5 12.500 1.500 9z" fill="none" stroke="currentColor" strokeWidth="1.800" />
        </svg>
        <Square />
      </span>
      <svg viewBox="0 0 6 18" className="ml-2 h-[18px] w-1.5" fill="currentColor" aria-hidden>
        <path d="M6 0L1 4l2 0v10H1l5 4z" />
      </svg>
      <button aria-label="Loop" className="ml-2">
        <svg viewBox="0 0 18 18" className="size-[18px]" fill="none" stroke="currentColor" strokeWidth="2" aria-hidden>
          <path d="M2 8V4h12M16 10v4H4" />
          <path d="M12 0l5 4-5 4zM6 10l-5 4 5 4z" fill="currentColor" stroke="none" />
        </svg>
      </button>
    </div>
  );
}

const ZERO = 72; // x of the 0.00 mark
const STEP = 72; // px per half second

function Timeline() {
  const marks = Array.from({ length: 12 }, (_, i) => i - 1);
  const end = ZERO + 10 * STEP;

  return (
    <div className="relative flex-1 overflow-hidden bg-[#242424]">
      <svg className="absolute inset-0 size-full" aria-hidden>
        <rect width="100%" height="32" fill="#1d1d1d" />
        <rect y="189" width="100%" height="33" fill="#1d1d1d" />
        <g fill="#161616">
          <rect width={ZERO} height="100%" />
          <rect x={end} width="200" height="100%" fill="#191919" />
          <rect x={end} width="200" height="32" />
          <rect x={end} y="189" width="200" height="33" />
        </g>
        {marks.map((m) => {
          const x = ZERO + m * STEP;
          return (
            <g key={m} shapeRendering="crispEdges">
              {m > 0 && m < 10 && <rect x={x} y="32" width="1" height="157" fill="#1e1e1e" />}
              <g fill="#a0a0a0">
                {m > 0 && <rect x={x - 1} y="22" width="1" height="9" />}
                {m > 0 && <rect x={x - 1} y="189" width="1" height="9" />}
                <rect x={x + STEP / 2 - 1} y="26" width="1" height="5" />
                <rect x={x + STEP / 2 - 1} y="189" width="1" height="5" />
              </g>
              {m !== 0 && m < 11 && (
                <g fontSize="12" fill={m < 0 || m > 9 ? "#454545" : "#5e5e5e"}>
                  <text x={m < 0 ? 5 : x + 5} y="30">{(m / 2).toFixed(2)}</text>
                  <text x={m < 0 ? 5 : x + 5} y="201">{(m / 2).toFixed(2)}</text>
                </g>
              )}
            </g>
          );
        })}
        <path d={`M${ZERO - 6} 1h12v24l-6 6-6-6zM${ZERO - 6} 221h12v-24l-6-6-6 6z`} fill="#6f3322" />
        <rect x={ZERO} y="0" width="1" height="100%" fill="#3f8f3f" />
        <path d={`M${ZERO} 0h6l-6 6zM${ZERO} 221h6l-6-6z`} fill="#5c8f2c" />
        <rect x={end - 1} y="0" width="1" height="100%" fill="#8a2a2a" />
        <path d={`M${end} 0h-6l6 6zM${end} 221h-6l6-6z`} fill="#8a2a2a" />
        <g fontSize="13" fill="#a8a8a8">
          <text x={ZERO + 9} y="13">0.00</text>
          <text x={ZERO + 9} y="218">0.00</text>
        </g>
        <text x="119" y="98" fontSize="22" fill="#c8c8c8">
          No Animation Selected
        </text>
      </svg>
    </div>
  );
}

function Sequencer() {
  return (
    <div className="flex min-w-0 flex-1 flex-col border-l-4 border-[#151515]">
      <SequencerBar />
      <div className="flex min-h-0 flex-1">
        <div className="flex w-[377px] shrink-0 flex-col pr-1">
          <div className="flex h-8 items-center pl-[7px] text-[13px]">
            <button className="flex h-[22px] w-[79px] items-center justify-center gap-1 rounded-sm bg-[#363636] text-[#858585]">
              <Plus color="#5b8034" />
              Track
            </button>
            <SearchBox label="Search Tracks" className="ml-1 w-[199px]" dim />
            <button aria-label="Filter" className="ml-[5px]">
              <svg viewBox="0 0 14 14" className="size-3.5" stroke="#858585" strokeWidth="1.500" aria-hidden>
                <path d="M0 2h14M3 7h8M5.500 12h3" />
              </svg>
            </button>
            <span className="ml-4 text-[#8f5f14]">0.00</span>
          </div>
          <div className="flex flex-1 flex-col justify-end bg-[#1e1e1e] pb-0.5 pl-2 text-[13px] text-[#8a8a8a]">
            <p>0 items</p>
          </div>
          <Transport />
        </div>
        <Timeline />
      </div>
    </div>
  );
}

function Caption() {
  return (
    <p className="pointer-events-none absolute right-[60px] bottom-[13px] text-center font-['Open_Sans',sans-serif] text-[65px] leading-[93px] font-bold whitespace-nowrap text-[#5ce1e6] [-webkit-text-stroke:18px_#000] [paint-order:stroke_fill]">
      Included Testing Environment
      <br />
      for Radial and Linear Bars
    </p>
  );
}

function AnimationsPanel() {
  return (
    <section className="relative flex h-[289px] shrink-0 flex-col">
      <PanelTab
        active
        label="Animations"
        icon={
          <svg viewBox="0 0 16 16" className="size-4" aria-hidden>
            <path d="M6 7l5-6 4 2-1 5-4 4z" fill="#b8d0e4" />
            <path d="M8 5l4 3" stroke="#4f5a66" />
            <path d="M0 8l4 2 3-2 3 4-5 3z" fill="#4f5a66" />
          </svg>
        }
      />
      <div className="flex min-h-0 flex-1 bg-[#242424]">
        <AnimationList />
        <Sequencer />
      </div>
      <Caption />
    </section>
  );
}

/* ─────────────────────────────────────────────
   Status bar
───────────────────────────────────────────── */
function StatusBar() {
  return (
    <footer className="flex h-8 items-center bg-[#242424] text-[13px] text-[#c0c0c0]">
      <button className="ml-2.5 flex items-center gap-[5px] pt-0.5">
        <svg viewBox="0 0 16 16" className="size-4" aria-hidden>
          <path d="M0 2h6l2 2h7v3a5 5 0 0 0-7 7H0z" fill="#b8b8b8" />
          <circle cx="11" cy="10" r="3" fill="none" stroke="#c0c0c0" strokeWidth="1.500" />
          <path d="M9 12l-3 4" stroke="#c0c0c0" strokeWidth="1.500" />
        </svg>
        Content Drawer
      </button>
      <Sep className="ml-[11px]" />
      <button className="ml-2 flex items-center gap-[5px] pt-0.5">
        <svg viewBox="0 0 16 16" className="size-4" aria-hidden>
          <path d="M1 7h14v8H1z" fill="#b8b8b8" />
          <path d="M1 5l13-4" stroke="#c8c8c8" strokeWidth="2" strokeDasharray="3 1" />
          <path d="M3 9h4v4H3z" fill="#8a8a8a" />
        </svg>
        Animations
      </button>
      <Sep className="ml-[9px]" />
      <button className="ml-2.5 flex items-center gap-[5px] pt-0.5">
        <svg viewBox="0 0 14 16" className="h-4 w-3.5" aria-hidden>
          <path d="M1 3h12v12H1zM2 0h2v3H2zM6 1h2v2H6zM10 0h2v3h-2z" fill="#c0c0c0" />
          <path d="M3 7l3 2-3 2M7 12h4" fill="none" stroke="#242424" strokeWidth="1.500" />
        </svg>
        Output Log
      </button>
      <Sep className="ml-[9px]" />
      <button className="ml-3 flex items-center gap-1 pt-0.5">
        <svg viewBox="0 0 16 14" className="h-3.5 w-4" fill="none" stroke="#c0c0c0" aria-hidden>
          <rect x="0.500" y="1.500" width="15" height="11" />
          <path d="M3 4l3 3-3 3M8 10h5" strokeWidth="1.500" />
        </svg>
        Cmd
        <ChevronDown className="ml-0.5 size-3.5" />
      </button>
      <input
        type="text"
        aria-label="Console command"
        placeholder="Enter Console Command"
        className="ml-2.5 h-[22px] w-[269px] rounded border border-[#333] bg-[#0f0f0f] pl-2 font-['DejaVu_Sans_Mono',monospace] text-[11px] outline-none placeholder:text-[#5a5a5a]"
      />
      <Sep className="ml-2" />
      <Sep className="ml-auto" />
      <button className="mr-px ml-3 flex items-center gap-[5px] pt-0.5">
        <Ban className="size-4 -scale-x-100" />
        Source Control Off
        <svg viewBox="0 0 6 6" className="mt-3 size-1.5" fill="#7a7a7a" aria-hidden>
          <path d="M6 0v6H0z" />
        </svg>
      </button>
    </footer>
  );
}

export default function App() {
  return (
    <div className="flex h-screen min-h-[900px] flex-col overflow-hidden bg-[#151515] pr-1 font-[Roboto,sans-serif]">
      <div className="-mr-1 h-5 shrink-0 bg-[#191919]" />
      <TitleBar />
      <Toolbar />
      <main className="flex min-h-0 flex-1 gap-[5px] pt-[5px] pb-1">
        <div className="flex w-[440px] shrink-0 flex-col gap-[7px] pb-px pl-1">
          <Palette />
          <Hierarchy />
        </div>
        <div className="flex min-w-0 flex-1 flex-col gap-[5px]">
          <div className="flex min-h-0 flex-1 gap-[5px]">
            <DesignerCanvas />
            <Details />
          </div>
          <AnimationsPanel />
        </div>
      </main>
      <StatusBar />
      <div className="-mr-1 h-5 shrink-0 bg-[#191919]" />
    </div>
  );
}
